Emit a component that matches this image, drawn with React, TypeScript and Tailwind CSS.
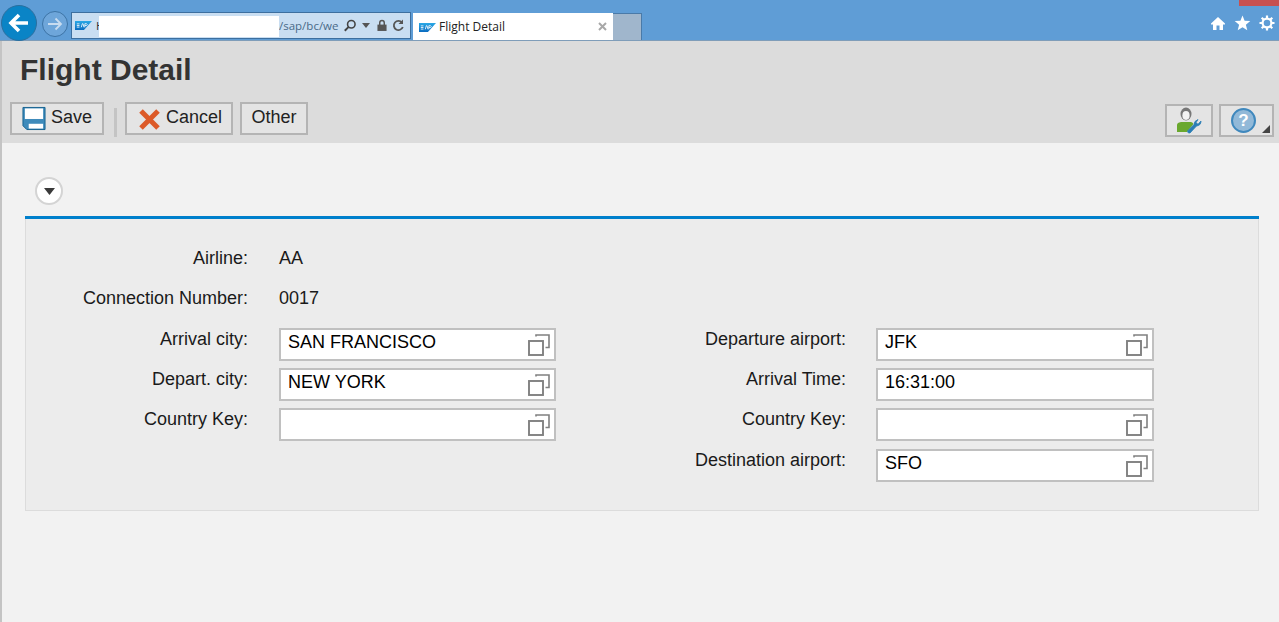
import React from "react";

const SapLogo = ({ cls = "" }: { cls?: string }) => (
  <svg width="17" height="9" viewBox="0 0 19 10" className={`shrink-0 ${cls}`}>
    <defs>
      <linearGradient id="sapg" x1="0" y1="0" x2="0" y2="1">
        <stop offset="0" stopColor="#2aa8e6" />
        <stop offset="1" stopColor="#0a6cc0" />
      </linearGradient>
    </defs>
    <path d="M0 0H19L10 10H0Z" fill="url(#sapg)" />
    <path d="M2 3.2H5M2 5H5M2 6.8H5M7 7L8.2 3H9L10 7M11 7V3H13Q14.5 3.5 13 5H11" stroke="#fff" strokeWidth="0.9" fill="none" />
  </svg>
);

const CopyIcon = () => (
  <svg width="22" height="22" viewBox="0 0 22 22" className="shrink-0">
    <path d="M8 2.5V1H21V13.5H17.5" fill="none" stroke="#808080" strokeWidth="1.6" />
    <rect x="1" y="7" width="14" height="14" fill="#fff" stroke="#808080" strokeWidth="1.9" />
  </svg>
);

const Field = ({ value, lookup = true }: { value: string; lookup?: boolean }) => (
  <div className="flex h-[33px] w-full items-center border-2 border-[#c0c0c0] bg-white pl-[7px] pr-[4px]">
    <span className="flex-1 pb-[5px] text-[18px] leading-none text-black">{value}</span>
    {lookup && <CopyIcon />}
  </div>
);

const Label = ({ children, top = true }: { children: React.ReactNode; top?: boolean }) => (
  <div className={`${top ? "pt-[1px]" : ""} text-right text-[18px] leading-[20px] text-[#1a1a1a]`}>{children}</div>
);

const Btn = ({ children, cls }: { children: React.ReactNode; cls: string }) => (
  <button className={`flex h-[33px] items-center border-2 border-[#b4b4b4] bg-[#e4e4e4] pb-[2px] text-[18px] text-[#222] ${cls}`}>
    {children}
  </button>
);

export default function App() {
  return (
    <div className="flex h-[622px] w-[1279px] flex-col overflow-hidden bg-[#f2f2f2] font-['Liberation_Sans',Arial,sans-serif]">
      {/* Browser chrome */}
      <div className="relative flex h-[41px] shrink-0 items-end border-b border-[#7f9db9] bg-[#5f9dd6]">
        <div className="absolute right-0 top-0 h-[6px] w-[40px] bg-[#c75050]" />
        <div className="absolute left-[1px] top-[5px] flex h-[36px] w-[36px] items-center justify-center rounded-full border border-[#2b6f9f] bg-[#0a84c6]">
          <svg width="22" height="20" viewBox="0 0 22 20">
            <path d="M20 10H3M11 2L3 10L11 18" fill="none" stroke="#fff" strokeWidth="3.6" />
          </svg>
        </div>
        <div className="absolute left-[42px] top-[11px] flex h-[26px] w-[26px] items-center justify-center rounded-full border border-[#3d74a6] bg-[#6ea6da]">
          <svg width="16" height="14" viewBox="0 0 16 14">
            <path d="M1 7H14M8.5 1.5L14 7L8.5 12.5" fill="none" stroke="#c8dcf0" strokeWidth="1.8" />
          </svg>
        </div>
        <div className="relative mb-px ml-[71px] flex h-[27px] w-[340px] items-center border border-[#3d6f9f] bg-[#c9def2] pl-[3px] font-['Open_Sans',sans-serif] text-[11.5px] text-[#4a6a88]">
          <SapLogo />
          <span className="ml-[4px] w-[183px] text-[#333]">H</span>
          <div className="absolute left-[27px] top-[3px] h-[21px] w-[180px] bg-white" />
          <span className="w-[60px] whitespace-nowrap">/sap/bc/we</span>
          <svg width="14" height="15" viewBox="0 0 16 16" className="ml-[4px]">
            <circle cx="9.5" cy="6.5" r="4.3" fill="none" stroke="#444" strokeWidth="1.8" />
            <path d="M6.5 9.5L2 14" stroke="#444" strokeWidth="2.2" />
          </svg>
          <svg width="8" height="5" viewBox="0 0 8 5" className="ml-[5px]">
            <path d="M0 0H8L4 5Z" fill="#555" />
          </svg>
          <svg width="10" height="13" viewBox="0 0 11 13" className="ml-[7px]">
            <path d="M3 6V3.5a2.5 2.5 0 0 1 5 0V6" fill="none" stroke="#555" strokeWidth="1.6" />
            <rect x="0.5" y="5.5" width="10" height="7" fill="#555" />
          </svg>
          <svg width="12" height="13" viewBox="0 0 12 13" className="ml-[5px]">
            <path d="M10 3.5A4.6 4.6 0 1 0 10.8 8" fill="none" stroke="#555" strokeWidth="1.8" />
            <path d="M11 0.5V5H6.5Z" fill="#555" />
          </svg>
        </div>
        <div className="ml-[2px] flex h-[27px] w-[200px] items-center bg-white pl-[6px] pr-[6px] font-['Open_Sans',sans-serif] text-[12px] text-[#222]">
          <SapLogo cls="mt-px" />
          <span className="ml-[3px] mt-px flex-1">Flight Detail</span>
          <svg width="9" height="9" viewBox="0 0 9 9">
            <path d="M1 1L8 8M8 1L1 8" stroke="#a8a8a8" strokeWidth="2" />
          </svg>
        </div>
        <div className="h-[27px] w-[29px] border-r border-t border-[#4a7aa8] bg-[#a0b6cc]" />
        <div className="mb-[9px] ml-auto mr-[4px] flex items-center gap-[8px]">
          <svg width="16" height="15" viewBox="0 0 16 15" className="-ml-[1px]">
            <path d="M8 1L1 7.5V8.5H3V14H6.5V9.5H9.5V14H13V8.5H15V7.5Z" fill="#fff" />
          </svg>
          <svg width="17" height="16" viewBox="0 0 17 16">
            <path d="M8.5 0.5L10.6 5.8L16.3 6.1L11.9 9.7L13.3 15.3L8.5 12.2L3.7 15.3L5.1 9.7L0.7 6.1L6.4 5.8Z" fill="#fff" />
          </svg>
          <svg width="16" height="16" viewBox="0 0 16 16">
            <circle cx="8" cy="8" r="4.4" fill="none" stroke="#fff" strokeWidth="2.2" />
            <path d="M8 0.5V3.5M8 12.5V15.5M0.5 8H3.5M12.5 8H15.5M2.7 2.7L4.8 4.8M11.2 11.2L13.3 13.3M13.3 2.7L11.2 4.8M4.8 11.2L2.7 13.3" stroke="#fff" strokeWidth="2.2" />
          </svg>
        </div>
      </div>

      <div className="flex min-h-0 flex-1 flex-col border-l-2 border-[#c4c4c4]">
        {/* Title + toolbar */}
        <div className="h-[102px] shrink-0 bg-[#dcdcdc] pl-[8px] pr-[5px]">
          <h1 className="ml-[10px] pt-[11px] text-[30px] font-bold leading-[35px] text-[#333]">Flight Detail</h1>
          <div className="mt-[15px] flex items-start">
            <Btn cls="w-[94px] pl-[10px]">
              <svg width="24" height="25" viewBox="0 0 25 25" className="mt-[2px] shrink-0">
                <path d="M1 1H24V24H5L1 20Z" fill="#3f8bbb" stroke="#14608f" />
                <rect x="3" y="2" width="19" height="11" fill="#fff" />
                <rect x="7" y="18" width="15" height="5" fill="#fff" />
              </svg>
              <span className="ml-[5px] text-[#222]">Save</span>
            </Btn>
            <div className="ml-[10px] mt-[6px] h-[29px] w-[3px] bg-[#c4c4c4]" />
            <Btn cls="ml-[8px] w-[108px] pl-[11px]">
              <svg width="23" height="23" viewBox="0 0 23 23" className="mt-[3px] shrink-0">
                <path d="M3 3L20 20M20 3L3 20" stroke="#dc5a28" strokeWidth="5" />
              </svg>
              <span className="ml-[5px]">Cancel</span>
            </Btn>
            <Btn cls="ml-[7px] w-[68px] justify-center">Other</Btn>
            <div className="ml-auto mt-[2px] flex gap-[6px]">
              <Btn cls="w-[48px] justify-center !pb-0">
                <svg width="26" height="27" viewBox="0 0 26 27">
                  <ellipse cx="10" cy="7" rx="5.5" ry="6.5" fill="#777" />
                  <ellipse cx="10" cy="8.5" rx="3.6" ry="4.4" fill="#f2f2f2" />
                  <path d="M1 25V18Q1 15.5 5 15H15Q17 15.5 17.5 17L11 25Z" fill="#6aa82e" />
                  <path d="M25 14Q25 18.5 20.5 19L14 26Q11.5 26.5 11.5 24L18 17.5Q18 14 22 12.5L20 15.6L22 17.3Z" fill="#2a7db5" stroke="#2a7db5" strokeWidth="0.8" />
                </svg>
              </Btn>
              <Btn cls="relative w-[55px] pl-[10px] !pb-0">
                <span className="flex h-[25px] w-[25px] items-center justify-center rounded-full border-2 border-[#3f88bd] bg-[#92b9d8] text-[17px] font-bold leading-none text-white">?</span>
                <svg width="8" height="8" viewBox="0 0 8 8" className="absolute bottom-[2px] right-[2px]">
                  <path d="M8 0V8H0Z" fill="#444" />
                </svg>
              </Btn>
            </div>
          </div>
        </div>

        {/* Content */}
        <div className="flex flex-1 flex-col pl-[23px] pr-[20px]">
          <div className="ml-[10px] mt-[34px] flex h-[28px] w-[28px] items-center justify-center rounded-full border-2 border-[#d4d4d4] bg-white">
            <svg width="11" height="7" viewBox="0 0 11 7">
              <path d="M0 0H11L5.5 7Z" fill="#3a3a3a" />
            </svg>
          </div>
          <div className="mt-[11px] h-[3px] bg-[#0080cc]" />
          <div className="h-[292px] border border-t-0 border-[#dcdcdc] bg-[#ececec] pt-[29px]">
            <div className="grid grid-cols-[222px_308px_290px_308px] grid-rows-[40px_40px_40px_40px_41px_40px] text-[18px] text-[#1a1a1a]">
              <Label top={false}>Airline:</Label>
              <div className="col-span-3 pl-[31px] leading-[20px]">AA</div>
              <Label top={false}>Connection Number:</Label>
              <div className="col-span-3 pl-[31px] leading-[20px]">0017</div>

              <Label>Arrival city:</Label>
              <div className="pl-[31px]"><Field value="SAN FRANCISCO" /></div>
              <Label>Departure airport:</Label>
              <div className="pl-[30px]"><Field value="JFK" /></div>

              <Label>Depart. city:</Label>
              <div className="pl-[31px]"><Field value="NEW YORK" /></div>
              <Label>Arrival Time:</Label>
              <div className="pl-[30px]"><Field value="16:31:00" lookup={false} /></div>

              <Label>Country Key:</Label>
              <div className="pl-[31px]"><Field value="" /></div>
              <Label>Country Key:</Label>
              <div className="pl-[30px]"><Field value="" /></div>

              <div />
              <div />
              <Label>Destination airport:</Label>
              <div className="pl-[30px]"><Field value="SFO" /></div>
            </div>
          </div>
        </div>
      </div>
    </div>
  );
}
